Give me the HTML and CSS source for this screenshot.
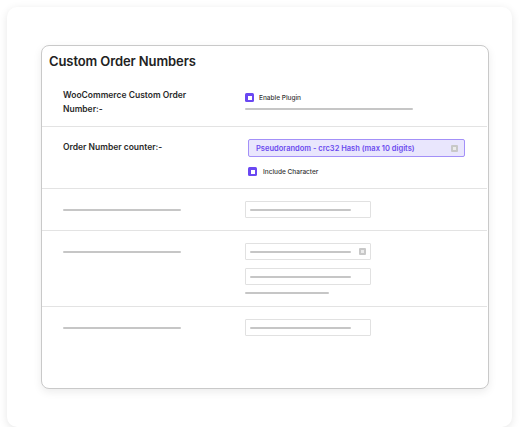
FILE: index.html
```
<!DOCTYPE html>
<html lang="en">
<head>
    <meta charset="UTF-8">
    <meta name="viewport" content="width=device-width, initial-scale=1.0">
    <title>Custom Order Numbers</title>
    <link rel="stylesheet" href="styles.css">
</head>
<body>
    <div class="frame">
        <div class="card">
            <h2 class="card-title">Custom Order Numbers</h2>

            <!-- Enable plugin -->
            <div class="row row-first">
                <div class="label">WooCommerce Custom Order<br>Number:-</div>
                <div class="value">
                    <label class="check"><span class="box"></span>Enable Plugin</label>
                    <div class="bar bar-wide"></div>
                </div>
            </div>

            <!-- Counter type -->
            <div class="row row-counter">
                <div class="label label-single">Order Number counter:-</div>
                <div class="value value-shift">
                    <div class="select">
                        <span>Pseudorandom - crc32 Hash (max 10 digits)</span>
                        <span class="select-icon"></span>
                    </div>
                    <label class="check check-sub"><span class="box"></span>Include Character</label>
                </div>
            </div>

            <!-- placeholder rows -->
            <div class="row row-ghost">
                <div class="bar bar-label"></div>
                <div class="value">
                    <div class="field"><div class="bar bar-field"></div></div>
                </div>
            </div>

            <div class="row row-ghost">
                <div class="bar bar-label"></div>
                <div class="value">
                    <div class="field"><div class="bar bar-field"></div><span class="field-icon"></span></div>
                    <div class="field field-gap"><div class="bar bar-field"></div></div>
                    <div class="bar bar-hint"></div>
                </div>
            </div>

            <div class="row row-ghost row-last">
                <div class="bar bar-label"></div>
                <div class="value">
                    <div class="field"><div class="bar bar-field"></div></div>
                </div>
            </div>
        </div>
    </div>
</body>
</html>
```

FILE: styles.css
```
/* Global */
body, html {
    margin: 0;
    padding: 0;
    background-color: #fff;
    font-family: 'Inter', 'Noto Sans', sans-serif;
    color: #222;
}

/* Outer frame */
.frame {
    box-sizing: border-box;
    margin: 7px 0 0 7px;
    width: 505px;
    height: 420px;
    padding: 38px 0 0 34px;
    background-color: #fff;
    border-radius: 10px;
    box-shadow: 0 2px 9px rgba(0, 0, 0, 0.1);
}

/* Settings card */
.card {
    box-sizing: border-box;
    width: 448px;
    height: 344px;
    padding-top: 6px;
    border: 1px solid #c9c9c9;
    border-radius: 8px;
    background-color: #fff;
    box-shadow: 0 3px 8px rgba(0, 0, 0, 0.08);
}

.card-title {
    margin: 0 0 0 7px;
    font-size: 13px;
    line-height: 18px;
    font-weight: 600;
    color: #222;
    letter-spacing: -0.1px;
}

.row {
    display: flex;
    align-items: flex-start;
    padding: 12px 0 12px 21px;
    margin-right: 1px;
    border-bottom: 1px solid #e3e3e3;
}

.row-first {
    margin-top: 19px;
    padding-top: 0;
    padding-bottom: 10px;
}

.row-last {
    border-bottom: none;
}

.label {
    width: 182px;
    flex-shrink: 0;
    font-size: 8.5px;
    line-height: 13.5px;
    font-weight: 600;
    color: #2a2a2a;
}

.label-single {
    padding-top: 2px;
}

.value {
    display: flex;
    flex-direction: column;
}

.value-shift {
    margin-left: 3px;
}

/* Checkbox */
.check {
    display: flex;
    align-items: center;
    font-size: 6.5px;
    font-weight: 500;
    color: #333;
    margin-top: 4px;
}

.check .box {
    box-sizing: border-box;
    width: 9px;
    height: 9px;
    margin-right: 5px;
    border-radius: 1.5px;
    background-color: #6a48f2;
    position: relative;
}

.check .box::after {
    content: "";
    position: absolute;
    left: 2.5px;
    top: 2.5px;
    width: 4px;
    height: 4px;
    background-color: #fff;
}

.check-sub {
    margin-top: 10px;
}

.check-sub .box {
    margin-right: 6px;
}

/* Gray placeholder bars */
.bar {
    height: 2px;
    border-radius: 1px;
    background-color: #c6c6c6;
}

.bar-wide {
    width: 168px;
    margin-top: 6px;
}

.bar-label {
    width: 118px;
    margin: 8px 64px 0 0;
    flex-shrink: 0;
}

.bar-field {
    width: 101px;
}

.bar-hint {
    width: 84px;
    margin-top: 7px;
}

/* Select */
.select {
    box-sizing: border-box;
    width: 217px;
    height: 18px;
    display: flex;
    align-items: center;
    justify-content: space-between;
    padding: 0 6px 0 7px;
    background-color: #e9e6fd;
    border: 1px solid #a390f8;
    border-radius: 2px;
    font-size: 7.5px;
    font-weight: 600;
    color: #6b4bef;
}

.select-icon, .field-icon {
    box-sizing: border-box;
    width: 7px;
    height: 7px;
    border: 2px solid #c8c8c8;
    background-color: #ececec;
    border-radius: 1px;
}

/* Text field placeholder */
.field {
    box-sizing: border-box;
    width: 126px;
    height: 17px;
    display: flex;
    align-items: center;
    justify-content: space-between;
    padding: 0 4px 0 4px;
    border: 1px solid #e1e1e1;
    border-radius: 1px;
}

.field .bar-field:only-child {
    margin-right: auto;
}

.field-gap {
    margin-top: 8px;
}
```
